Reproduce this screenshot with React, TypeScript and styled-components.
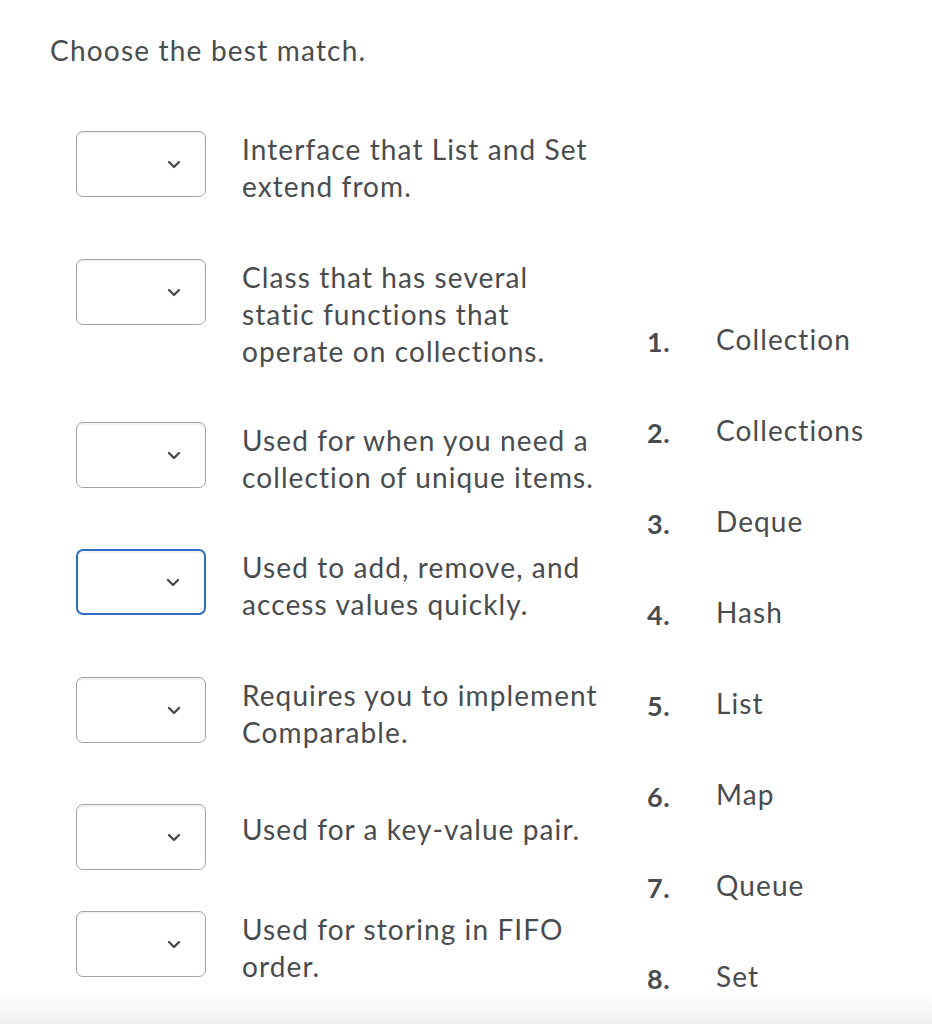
import * as React from 'react';
import styled, { createGlobalStyle } from 'styled-components';

const GlobalStyle = createGlobalStyle`
  html, body {
    margin: 0;
    padding: 0;
    background: #ffffff;
  }
  body {
    font-family: Lato, "Open Sans", "Liberation Sans", sans-serif;
    color: #494c4e;
    letter-spacing: 1.1px;
  }
`;

const Page = styled.div`
  padding: 32px 0 0 50px;
  min-height: 1024px;
  box-sizing: border-box;
`;

const Title = styled.h1`
  margin: 0;
  font-size: 28px;
  font-weight: 400;
  line-height: 36px;
  letter-spacing: 1.2px;
`;

const Board = styled.div`
  display: flex;
  margin-top: 63px;
  padding-left: 26px;
`;

const LeftColumn = styled.div`
  width: 571px;
  display: flex;
  flex-direction: column;
`;

const Row = styled.div<{ $h: number }>`
  display: flex;
  align-items: flex-start;
  gap: 36px;
  height: ${(p) => p.$h}px;
`;

const SelectBox = styled.div<{ $focused?: boolean }>`
  flex: none;
  width: 130px;
  height: 66px;
  box-sizing: border-box;
  border-radius: 7px;
  border: ${(p) => (p.$focused ? '2px solid #2f6dbf' : '1.5px solid #a0a3a6')};
  box-shadow: inset 0 2px 0 rgba(0, 0, 0, 0.05);
  background: #fff;
  display: flex;
  align-items: center;
  justify-content: flex-end;
  padding-right: 24px;
`;

const Prompt = styled.div<{ $offset?: number }>`
  font-size: 28px;
  line-height: 37px;
  white-space: nowrap;
  margin-top: ${(p) => p.$offset ?? 0}px;
`;

const RightColumn = styled.div`
  padding-top: 162px;
  display: flex;
  flex-direction: column;
`;

const Choice = styled.div`
  display: flex;
  align-items: center;
  height: 91px;
  font-size: 28px;
  white-space: nowrap;
`;

const Num = styled.span`
  width: 69px;
  font-weight: 700;
  font-size: 27px;
  padding-top: 6px;
  letter-spacing: 0.5px;
`;

const Fade = styled.div`
  position: fixed;
  left: 0;
  right: 0;
  bottom: 0;
  height: 30px;
  background: linear-gradient(to bottom, rgba(255, 255, 255, 0), #efefef);
  pointer-events: none;
`;

const Chevron = () => (
  <svg width="14" height="9" viewBox="0 0 14 9">
    <path d="M2 2l5 5 5-5" fill="none" stroke="#494c4e" strokeWidth="2.4" strokeLinecap="round" strokeLinejoin="round" />
  </svg>
);

const rows: { lines: string[]; h: number; offset?: number; focused?: boolean }[] = [
  { lines: ['Interface that List and Set', 'extend from.'], h: 128 },
  { lines: ['Class that has several', 'static functions that', 'operate on collections.'], h: 163 },
  { lines: ['Used for when you need a', 'collection of unique items.'], h: 127 },
  { lines: ['Used to add, remove, and', 'access values quickly.'], h: 128, focused: true },
  { lines: ['Requires you to implement', 'Comparable.'], h: 127 },
  { lines: ['Used for a key-value pair.'], h: 107, offset: 7 },
  { lines: ['Used for storing in FIFO', 'order.'], h: 80 },
];

const choices = ['Collection', 'Collections', 'Deque', 'Hash', 'List', 'Map', 'Queue', 'Set'];

export default function App() {
  return (
    <>
      <GlobalStyle />
      <Page>
        <Title>Choose the best match.</Title>
        <Board>
          <LeftColumn>
            {rows.map((r, i) => (
              <Row key={i} $h={r.h}>
                <SelectBox $focused={r.focused}>
                  <Chevron />
                </SelectBox>
                <Prompt $offset={r.offset}>
                  {r.lines.map((l, j) => (
                    <React.Fragment key={j}>
                      {j > 0 && <br />}
                      {l}
                    </React.Fragment>
                  ))}
                </Prompt>
              </Row>
            ))}
          </LeftColumn>
          <RightColumn>
            {choices.map((c, i) => (
              <Choice key={c}>
                <Num>{i + 1}.</Num>
                <span>{c}</span>
              </Choice>
            ))}
          </RightColumn>
        </Board>
      </Page>
      <Fade />
    </>
  );
}
